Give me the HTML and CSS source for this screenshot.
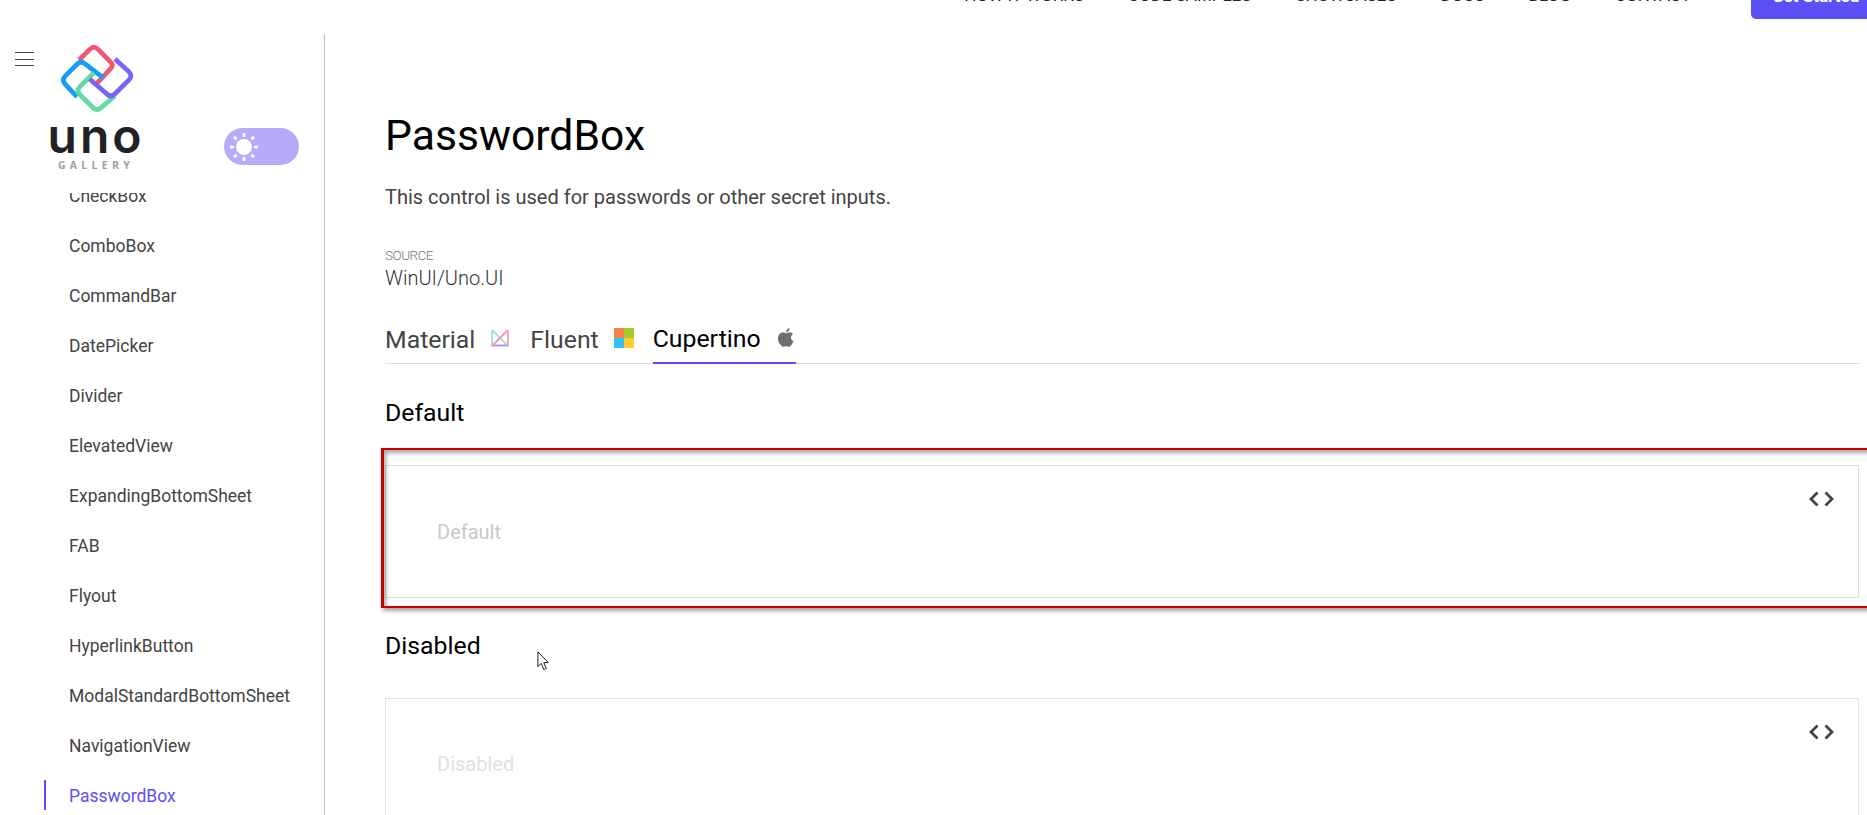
FILE: index.html
```html
<!DOCTYPE html>
<html lang="en">
<head>
    <meta charset="UTF-8">
    <meta name="viewport" content="width=device-width, initial-scale=1.0">
    <title>Uno Gallery - PasswordBox</title>
    <link rel="stylesheet" href="styles.css">
</head>
<body>
    <header class="site-header">
        <a class="site-link">HOW IT WORKS</a>
        <a class="site-link">CODE SAMPLES</a>
        <a class="site-link">SHOWCASES</a>
        <a class="site-link">DOCS</a>
        <a class="site-link">BLOG</a>
        <a class="site-link last">CONTACT</a>
        <a class="get-started">Get Started</a>
    </header>

    <div class="layout">
        <aside class="sidebar">
            <div class="sidebar-top">
                <div class="hamburger"><span></span><span></span><span></span></div>
                <div class="logo">
                    <svg class="logo-mark" width="76" height="76" viewBox="0 0 72 72" fill="none" stroke-width="4.500">
                        <path d="M20 18 L30 8 Q34 4 38 8 L50 20 Q53 23 50 26 L36 41" stroke="#f4566f"/>
                        <path d="M18 53 L7 41 Q3 37 7 33 L18 22 Q22 18 26 22 L43 35" stroke="#1a9cf5"/>
                        <path d="M34 30 L21 43 Q17 47 21 51 L33 63 Q37 67 41 63 L54 52" stroke="#62dba3"/>
                        <path d="M54 17 L67 29 Q71 33 67 37 L54 50 Q50 54 46 50 L30 36" stroke="#7a64f5"/>
                    </svg>
                    <div class="logo-word">uno</div>
                    <div class="logo-sub">GALLERY</div>
                </div>
                <div class="theme-toggle">
                    <svg width="28" height="28" viewBox="0 0 28 28" fill="#fff">
                        <circle cx="14" cy="14" r="8"/>
                        <rect x="12.700" y="0" width="2.600" height="4"/>
                        <rect x="12.700" y="24" width="2.600" height="4"/>
                        <rect x="0" y="12.700" width="4" height="2.600"/>
                        <rect x="24" y="12.700" width="4" height="2.600"/>
                        <rect x="3.500" y="3.700" width="3.500" height="2.600" transform="rotate(45 5.250 5)"/>
                        <rect x="21" y="3.700" width="3.500" height="2.600" transform="rotate(-45 22.750 5)"/>
                        <rect x="3.500" y="21.700" width="3.500" height="2.600" transform="rotate(-45 5.250 23)"/>
                        <rect x="21" y="21.700" width="3.500" height="2.600" transform="rotate(45 22.750 23)"/>
                    </svg>
                </div>
            </div>
            <nav class="side-nav">
                <ul class="side-list">
                    <li><a>CheckBox</a></li>
                    <li><a>ComboBox</a></li>
                    <li><a>CommandBar</a></li>
                    <li><a>DatePicker</a></li>
                    <li><a>Divider</a></li>
                    <li><a>ElevatedView</a></li>
                    <li><a>ExpandingBottomSheet</a></li>
                    <li><a>FAB</a></li>
                    <li><a>Flyout</a></li>
                    <li><a>HyperlinkButton</a></li>
                    <li><a>ModalStandardBottomSheet</a></li>
                    <li><a>NavigationView</a></li>
                    <li class="active"><a>PasswordBox</a></li>
                </ul>
            </nav>
        </aside>

        <main class="content">
            <h1>PasswordBox</h1>
            <p class="intro">This control is used for passwords or other secret inputs.</p>
            <div class="source-label">SOURCE</div>
            <div class="source-value">WinUI/Uno.UI</div>

            <div class="tabs">
                <a class="tab tab-material">Material
                    <svg width="18" height="18" viewBox="0 0 18 18" fill="none" stroke-width="2.200">
                        <path d="M1 1 L1 17" stroke="#9fe8cb"/>
                        <path d="M1 1 L17 17" stroke="#a6e6d6"/>
                        <path d="M17 1 L1 17" stroke="#f59bb5"/>
                        <path d="M17 1 L17 17" stroke="#f7a3bb"/>
                        <path d="M1 16.500 L17 16.500" stroke="#a99cf5" stroke-width="2"/>
                    </svg>
                </a>
                <a class="tab tab-fluent">Fluent
                    <svg width="20" height="20" viewBox="0 0 20 20">
                        <rect width="10" height="10" fill="#fc7f4f"/>
                        <rect x="10" width="10" height="10" fill="#a3cc2b"/>
                        <rect y="10" width="10" height="10" fill="#33c1f2"/>
                        <rect x="10" y="10" width="10" height="10" fill="#fdcc33"/>
                    </svg>
                </a>
                <a class="tab tab-active">Cupertino
                    <svg width="16" height="19" viewBox="0 0 16 19" fill="#6f6f6f">
                        <path d="M8 5.200c1 0 2-.9 3.400-.9 1.300 0 2.700.6 3.500 1.900-2.900 1.700-2.400 5.700.6 6.900-.6 1.600-1.300 2.900-2.300 4.200-.7.900-1.400 1.500-2.400 1.500s-1.400-.6-2.700-.6-1.800.6-2.700.6c-1 0-1.800-.8-2.500-1.700C.9 15.700 0 13.200 0 10.800c0-3.700 2.400-6.500 5.200-6.500 1.200 0 2 .9 2.800.9z"/>
                        <path d="M8 4.200C7.900 2.200 9.500.4 11.500 0c.2 2.200-1.500 4.100-3.500 4.200z"/>
                    </svg>
                </a>
            </div>

            <h2 class="first">Default</h2>
            <section class="sample-card">
                <span class="placeholder">Default</span>
                <svg class="code-icon" width="25" height="16" viewBox="0 0 25 16" fill="none" stroke="#444" stroke-width="2.800">
                    <path d="M8.500 1.500 L2 8 L8.500 14.500"/>
                    <path d="M16.500 1.500 L23 8 L16.500 14.500"/>
                </svg>
                <div class="highlight"></div>
            </section>

            <h2>Disabled</h2>
            <section class="sample-card disabled">
                <span class="placeholder">Disabled</span>
                <svg class="code-icon" width="25" height="16" viewBox="0 0 25 16" fill="none" stroke="#444" stroke-width="2.800">
                    <path d="M8.500 1.500 L2 8 L8.500 14.500"/>
                    <path d="M16.500 1.500 L23 8 L16.500 14.500"/>
                </svg>
            </section>
        </main>
    </div>

    <svg class="cursor" width="13" height="20" viewBox="0 0 13 20" fill="#fff" stroke="#222" stroke-width="1">
        <path d="M.9.9 V15.500 L4.300 12.400 L6.800 18.600 L9.300 17.500 L6.800 11.600 H11.400 Z"/>
    </svg>
</body>
</html>
```

FILE: styles.css
```css
* {
    box-sizing: border-box;
}
body {
    margin: 0;
    position: relative;
    height: 815px;
    overflow: hidden;
    background-color: white;
    font-family: Roboto, Arial, sans-serif;
    color: #000;
}

/* top bar, scrolled almost out of the shot */
.site-header {
    height: 19px;
    overflow: hidden;
    display: flex;
    justify-content: flex-end;
    align-items: flex-end;
}
.site-link {
    font-size: 17px;
    line-height: 17px;
    margin-bottom: 15px;
    margin-right: 44px;
    color: #222;
    white-space: nowrap;
}
.site-link.last {
    margin-right: 60px;
}
.get-started {
    width: 116px;
    height: 48px;
    padding: 15px 0 0 21px;
    background-color: #5c4ff5;
    border-radius: 5px 0 0 5px;
    color: white;
    font-size: 17px;
    line-height: 20px;
    font-weight: bold;
    white-space: nowrap;
}

.layout {
    display: flex;
    margin-top: 15px;
    height: 781px;
}

/* sidebar */
.sidebar {
    width: 325px;
    flex-shrink: 0;
    border-right: 1px solid #bbb;
    display: flex;
    flex-direction: column;
    overflow: hidden;
}
.sidebar-top {
    height: 159px;
    flex-shrink: 0;
    display: flex;
    padding-left: 15px;
}
.hamburger {
    width: 19px;
    margin-top: 18px;
    display: flex;
    flex-direction: column;
    gap: 5.500px;
}
.hamburger span {
    height: 1px;
    background-color: #444;
}
.logo {
    width: 100px;
    margin-left: 12px;
    margin-top: 9px;
    display: flex;
    flex-direction: column;
    align-items: center;
}
.logo-mark {
    flex-shrink: 0;
    margin: -2px 0;
}
.logo-word {
    font-family: Inter, sans-serif;
    font-size: 48px;
    font-weight: 600;
    line-height: 30px;
    letter-spacing: 3px;
    margin-top: 6px;
    color: #222;
}
.logo-sub {
    font-family: "Open Sans", sans-serif;
    font-size: 10.500px;
    font-weight: 700;
    line-height: 12px;
    letter-spacing: 4.300px;
    margin-top: 8px;
    color: #a0a0a0;
}
.theme-toggle {
    width: 75px;
    height: 37px;
    margin-top: 94px;
    margin-left: 78px;
    padding: 4.500px 0 0 6px;
    border-radius: 19px;
    background-color: #b7aaf9;
}
.theme-toggle svg {
    display: block;
}
.side-nav {
    flex: 1;
    overflow: hidden;
}
.side-list {
    list-style: none;
    margin: -22px 0 0 0;
    padding: 0;
}
.side-list li {
    position: relative;
    height: 50px;
    line-height: 50px;
    padding-left: 69px;
    font-size: 17.500px;
    color: #444;
}
.side-list .active {
    color: #5c4ff5;
}
.side-list .active::before {
    content: "";
    position: absolute;
    left: 44px;
    top: 9px;
    width: 2px;
    height: 30px;
    background-color: #5c4ff5;
}

/* main column */
.content {
    flex: 1;
    min-width: 0;
    overflow: hidden;
    padding: 0 8px 0 60px;
}
h1 {
    margin: 74px 0 0;
    font-size: 42.670px;
    line-height: 54px;
    font-weight: 400;
}
.intro {
    margin: 23px 0 0;
    font-size: 20px;
    line-height: 24px;
    color: #444;
}
.source-label {
    margin-top: 38px;
    font-size: 13.500px;
    letter-spacing: -0.5px;
    font-weight: 300;
    line-height: 16px;
    color: #777;
}
.source-value {
    margin-top: 3px;
    font-size: 20px;
    font-weight: 300;
    line-height: 24px;
    color: #333;
}
.tabs {
    display: flex;
    margin-top: 24px;
    height: 50px;
    border-bottom: 1px solid #ddd;
}
.tab {
    display: flex;
    align-items: center;
    gap: 16px;
    height: 50px;
    font-size: 24.800px;
    color: #444;
    white-space: nowrap;
}
.tab svg {
    margin-top: -2px;
}
.tab-material {
    margin-right: 21px;
}
.tab-fluent {
    gap: 15px;
    margin-right: 19px;
}
.tab-active {
    color: #000;
    border-bottom: 2px solid #5c4ff5;
    gap: 17px;
    padding-right: 2px;
}
h2 {
    margin: 30px 0 0;
    font-size: 24.800px;
    line-height: 36px;
    font-weight: 400;
}
h2.first {
    margin-top: 31px;
}
.sample-card {
    position: relative;
    margin-top: 34px;
    height: 133px;
    border: 1px solid #ddd;
    padding-left: 51px;
    display: flex;
    align-items: center;
}
.sample-card.disabled {
    height: 200px;
    border-color: #e4e4e4;
    align-items: flex-start;
    padding-top: 53px;
}
.placeholder {
    font-size: 20px;
    line-height: 24px;
    color: #c8c8c8;
}
.disabled .placeholder {
    color: #e0e0e0;
}
.code-icon {
    position: absolute;
    top: 25px;
    right: 24px;
}
.highlight {
    position: absolute;
    top: -18px;
    left: -5px;
    right: -30px;
    bottom: -11px;
    border-style: solid;
    border-color: #c80000;
    border-width: 2.500px 3px;
    box-shadow: 2px 3px 4px rgba(0,0,0,0.35), inset 2px 3px 4px rgba(0,0,0,0.35);
}
.cursor {
    position: absolute;
    left: 537px;
    top: 651px;
}
```
